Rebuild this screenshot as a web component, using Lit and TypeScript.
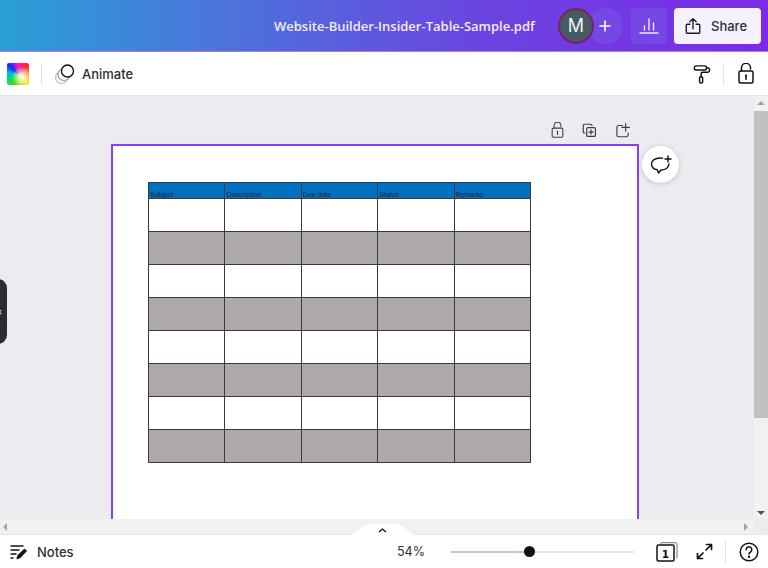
import { LitElement, html, css } from "lit";
import { customElement } from "lit/decorators.js";

const lockIcon = (w: number, h: number, c: string, sw: number) => html`<svg width=${w} height=${h} viewBox="0 0 16 21" fill="none" stroke=${c} stroke-width=${sw} stroke-linecap="round" stroke-linejoin="round"><rect x="1" y="8" width="14" height="12" rx="1.500"/><path d="M3.500 8V5a4.500 4.500 0 0 1 9 -.3V6"/><circle cx="8" cy="12.500" r="1" fill=${c} stroke="none"/><path d="M8 12.500v4"/></svg>`;

@customElement("app-root")
export class AppRoot extends LitElement {
  static styles = css`
    :host { display: flex; flex-direction: column; width: 768px; height: 568px; overflow: hidden; font-family: Inter, "Noto Sans", sans-serif; color: #0e1318; background: #fff; position: relative; }
    svg { display: block; flex: none; }
    .top { height: 52px; flex: none; box-sizing: border-box; background: linear-gradient(90deg, #2a9fd6 0%, #4f6fdc 32%, #6a45e0 62%, #7d2ae8 100%); display: flex; align-items: center; padding: 0 7px 0 0; border-bottom: 1px solid #a77cf0; }
    .title { margin-left: 274px; width: 284px; color: #f2ecfd; font-family: "Open Sans", sans-serif; font-size: 13px; font-weight: 600; white-space: nowrap; line-height: 20px; }
    .people { display: flex; align-items: center; width: 66px; position: relative; height: 36px; }
    .plus { position: absolute; left: 29px; top: 0; width: 36px; height: 36px; border-radius: 50%; background: #7547e4; display: flex; align-items: center; justify-content: center; }
    .avatar { position: relative; box-sizing: border-box; width: 36px; height: 36px; border-radius: 50%; background: #455a64; border: 2px solid #7a2363; color: #f1f3f4; font-size: 18px; display: flex; align-items: center; justify-content: center; }
    .insight { margin-left: 7px; width: 36px; height: 36px; border-radius: 4px; background: #7547e4; display: flex; align-items: center; justify-content: center; }
    .share { margin-left: 7px; width: 87px; height: 36px; box-sizing: border-box; border-radius: 4px; background: #f5f2fd; display: flex; align-items: center; gap: 9px; padding-left: 10px; font-size: 13px; font-weight: 500; color: #2c2f36; }
    .bar { height: 43px; flex: none; display: flex; align-items: center; border-bottom: 1px solid #e3e4e8; padding-left: 7px; padding-right: 14px; }
    .swatch { width: 22px; height: 22px; border-radius: 2px; background: radial-gradient(circle at 68% 62%, #fff 0%, rgba(255,255,255,.6) 22%, rgba(255,255,255,0) 50%), conic-gradient(#f020c0 0deg, #ff2040 45deg, #ff8a00 100deg, #ffe600 135deg, #40e000 200deg, #00e080 240deg, #00b0f0 280deg, #2020ff 315deg, #f020c0 360deg); }
    .vr { width: 1px; height: 22px; background: #e1e2e6; }
    .bar .vr.a { margin: 0 12px; }
    .animate { font-size: 13px; font-weight: 500; margin-left: 6px; color: #2c2f36; }
    .spacer { flex: 1; }
    .bar .vr.b { margin: 0 14px 0 12px; }
    .work { flex: 1; min-height: 0; display: grid; grid-template-columns: 1fr 14px; grid-template-rows: 1fr 16px; background: #ebecf0; }
    .canvas { overflow: hidden; position: relative; }
    .tools { height: 48px; box-sizing: border-box; display: flex; align-items: flex-end; padding: 0 0 6px 551px; }
    .tools .copy { margin-left: 18px; }
    .tools .add { margin-left: 18px; }
    .page { margin-left: 111px; width: 528px; height: 400px; box-sizing: border-box; background: #fff; border: 2px solid #8b3dff; padding: 36px 0 0 35px; }
    table { border-collapse: collapse; table-layout: fixed; width: 383px; }
    th, td { border: 1px solid #3a3a3a; padding: 0; }
    th { height: 15px; background: #0070c0; font-size: 7px; font-weight: 400; font-family: "Liberation Sans", sans-serif; color: #0b2a44; text-align: left; vertical-align: bottom; line-height: 7px; padding-left: 1px; }
    td { height: 32px; background: #fff; }
    tr.g td { background: #aea9a8; }
    .comment { position: absolute; left: 642px; top: 50px; width: 37px; height: 37px; border-radius: 50%; background: #fff; box-shadow: 0 1px 5px rgba(57,76,96,.25); display: flex; align-items: center; justify-content: center; }
    .handle { position: absolute; left: -14px; top: 183px; width: 21px; height: 65px; box-sizing: border-box; padding-right: 5px; border-radius: 9px; background: #2a2d33; color: #fff; font-size: 9px; display: flex; align-items: center; justify-content: flex-end; }
    .vscroll { background: #f1f1f1; display: flex; flex-direction: column; align-items: center; }
    .thumb { width: 14px; margin-top: 6px; height: 307px; background: #c1c1c1; }
    .up { width: 0; height: 0; border: 4px solid transparent; border-top: 0; border-bottom: 4px solid #a3a3a3; margin-top: 5px; }
    .down { width: 0; height: 0; border: 4px solid transparent; border-bottom: 0; border-top: 4px solid #505050; margin-top: auto; margin-bottom: 4px; }
    .hscroll { background: #f1f1f1; display: flex; align-items: center; justify-content: space-between; padding: 0 6px 0 3px; position: relative; border-bottom: 1px solid #e3e4e8; }
    .left { border: 4px solid transparent; border-left: 0; border-right: 4px solid #a3a3a3; }
    .right { border: 4px solid transparent; border-right: 0; border-left: 4px solid #a3a3a3; }
    .corner { background: #ebecf0; }
    .tab { position: absolute; left: 348px; top: 5px; z-index: 1; }
    .foot { height: 33px; flex: none; display: flex; align-items: center; padding-left: 10px; }
    .notes { font-size: 13px; font-weight: 500; margin-left: 9px; width: 360px; color: #2c2f36; }
    .pct { font-size: 12.500px; width: 54px; color: #2c2f36; font-weight: 400; }
    .slider { width: 183px; height: 12px; position: relative; display: flex; align-items: center; }
    .track { flex: 1; height: 2px; background: #c1c5cc; }
    .track.l { flex: none; width: 73px; }
    .track.r { background: #e3e5e8; }
    .knob { width: 11px; height: 11px; border-radius: 50%; background: #0e1318; }
    .pages { margin-left: 22px; }
    .expand { margin-left: 18px; }
    .foot .vr { margin: 0 13px 0 12px; height: 22px; }
  `;

  render() {
    const rows = [0, 1, 2, 3, 4, 5, 6, 7];
    const cols = [0, 1, 2, 3, 4];
    return html`
      <div class="top">
        <div class="title">Website-Builder-Insider-Table-Sample.pdf</div>
        <div class="people">
          <div class="plus"><svg width="14" height="14" viewBox="0 0 14 14" stroke="#fff" stroke-width="1.600" stroke-linecap="round"><path d="M7 2v10M2 7h10"/></svg></div>
          <div class="avatar">M</div>
        </div>
        <div class="insight"><svg width="20" height="18" viewBox="0 0 20 18" fill="none" stroke="#efe9fd" stroke-width="1.400" stroke-linecap="round"><path d="M1 16h18M5.500 13V9M10 13V2M14.500 13V6"/></svg></div>
        <div class="share">
          <svg width="18" height="18" viewBox="0 0 20 20" fill="none" stroke="#16191f" stroke-width="1.500" stroke-linecap="round" stroke-linejoin="round"><path d="M6.500 8H3.500a1 1 0 0 0-1 1v8a1 1 0 0 0 1 1h13a1 1 0 0 0 1-1V9a1 1 0 0 0-1-1h-3"/><path d="M10 13V2M6.500 5.200 10 1.800l3.500 3.400"/></svg>
          Share
        </div>
      </div>
      <div class="bar">
        <div class="swatch"></div>
        <div class="vr a"></div>
        <svg width="22" height="22" viewBox="0 0 22 22" fill="none" stroke-width="1.400"><circle cx="7.500" cy="14.500" r="6" stroke="#c4c6cb"/><circle cx="10" cy="11.500" r="6" stroke="#a4a7ad" fill="#fff"/><circle cx="13.500" cy="8" r="6" stroke="#0e1318" fill="#fff"/></svg>
        <div class="animate">Animate</div>
        <div class="spacer"></div>
        <svg width="18" height="20" viewBox="0 0 20 22" fill="none" stroke="#0e1318" stroke-width="1.600" stroke-linecap="round" stroke-linejoin="round"><rect x="1.500" y="2" width="13.500" height="4.500" rx="2"/><path d="M15 4h1.500a1.800 1.800 0 0 1 1.800 1.800v1.400A1.800 1.800 0 0 1 16.500 9H10.500a1.500 1.500 0 0 0-1.500 1.500V14"/><rect x="7.300" y="14" width="3.400" height="7" rx="1.500"/></svg>
        <div class="vr b"></div>
        ${lockIcon(16, 21, "#0e1318", 1.500)}
      </div>
      <div class="work">
        <div class="canvas">
          <div class="tools">
            ${lockIcon(13, 16, "#3b4048", 1.400)}
            <svg class="copy" width="15" height="15" viewBox="0 0 24 24" fill="none" stroke="#3b4048" stroke-width="1.900" stroke-linecap="round" stroke-linejoin="round"><rect x="7.500" y="7.500" width="14" height="14" rx="2"/><path d="M14.500 11v7M11 14.500h7"/><path d="M16 4V4a2 2 0 0 0-2-2H4a2 2 0 0 0-2 2v10a2 2 0 0 0 2 2h.5"/></svg>
            <svg class="add" width="15" height="15" viewBox="0 0 24 24" fill="none" stroke="#3b4048" stroke-width="1.900" stroke-linecap="round" stroke-linejoin="round"><path d="M12 4H6a3 3 0 0 0-3 3v12a3 3 0 0 0 3 3h12a3 3 0 0 0 3-3v-3"/><path d="M17 1v12M11 7h12"/></svg>
          </div>
          <div class="page">
            <table>
              <thead><tr>${["Subject", "Description", "Due date", "Status", "Remarks"].map((t) => html`<th>${t}</th>`)}</tr></thead>
              <tbody>${rows.map((r) => html`<tr class=${r % 2 ? "g" : ""}>${cols.map(() => html`<td></td>`)}</tr>`)}</tbody>
            </table>
          </div>
          <div class="comment"><svg width="22" height="20" viewBox="0 0 22 20" fill="none" stroke="#0e1318" stroke-width="1.400" stroke-linecap="round" stroke-linejoin="round"><path d="M12.500 3.200C11.800 3 11 3 10 3 5.300 3 1.500 5.500 1.500 9c0 3 2.500 5.200 5.700 5.800L8.500 18l2.500-3c4.500-.2 7.500-2.600 8-6"/><path d="M18 1v6M15 4h6"/></svg></div>
          <div class="handle">‹</div>
        </div>
        <div class="vscroll"><div class="up"></div><div class="thumb"></div><div class="down"></div></div>
        <div class="hscroll">
          <div class="left"></div>
          <svg class="tab" width="70" height="11" viewBox="0 0 70 11"><path d="M0 11C10 11 12 0 24 0h22c12 0 14 11 24 11z" fill="#fff"/><path d="M31 8l3.500-3L38 8" fill="none" stroke="#0e1318" stroke-width="1.300"/></svg>
          <div class="right"></div>
        </div>
        <div class="corner"></div>
      </div>
      <div class="foot">
        <svg width="18" height="16" viewBox="0 0 18 16" fill="none" stroke="#0e1318" stroke-width="1.400" stroke-linecap="round" stroke-linejoin="round"><path d="M1 2h12M1 6h8M1 10h5M1 14h2"/><path d="M7 14.500l.8-3L14.500 5l2 2-6.500 6.700z" fill="#0e1318" stroke-width="1"/></svg>
        <div class="notes">Notes</div>
        <div class="pct">54%</div>
        <div class="slider"><div class="track l"></div><div class="knob"></div><div class="track r"></div></div>
        <div class="pages"><svg width="22" height="20" viewBox="0 0 22 20" fill="none" stroke="#0e1318" stroke-width="1.500"><path d="M5 2.500V1.500a.8.8 0 0 1 .8-.8h13.400a1.800 1.800 0 0 1 1.800 1.800V15a1 1 0 0 1-1 1" stroke="#6a6e75" stroke-width="1"/><rect x="1" y="3" width="17" height="16" rx="1.500"/><text x="9.500" y="15.500" text-anchor="middle" font-family="DejaVu Sans" font-size="10.500" font-weight="700" fill="#0e1318" stroke="none">1</text></svg></div>
        <div class="expand"><svg width="17" height="17" viewBox="0 0 17 17" fill="none" stroke="#0e1318" stroke-width="1.700" stroke-linecap="round" stroke-linejoin="round"><path d="M10 7l5.500-5.500M10.500 1.500h5v5M7 10l-5.500 5.500M1.500 10.500v5h5"/></svg></div>
        <div class="vr"></div>
        <svg width="20" height="20" viewBox="0 0 20 20" fill="none" stroke="#0e1318" stroke-width="1.500" stroke-linecap="round"><circle cx="10" cy="10" r="8.800"/><path d="M7.200 7.700A2.800 2.800 0 1 1 11.500 10c-1 .6-1.500 1.100-1.500 2"/><circle cx="10" cy="14.700" r=".5" fill="#0e1318"/></svg>
      </div>
    `;
  }
}
